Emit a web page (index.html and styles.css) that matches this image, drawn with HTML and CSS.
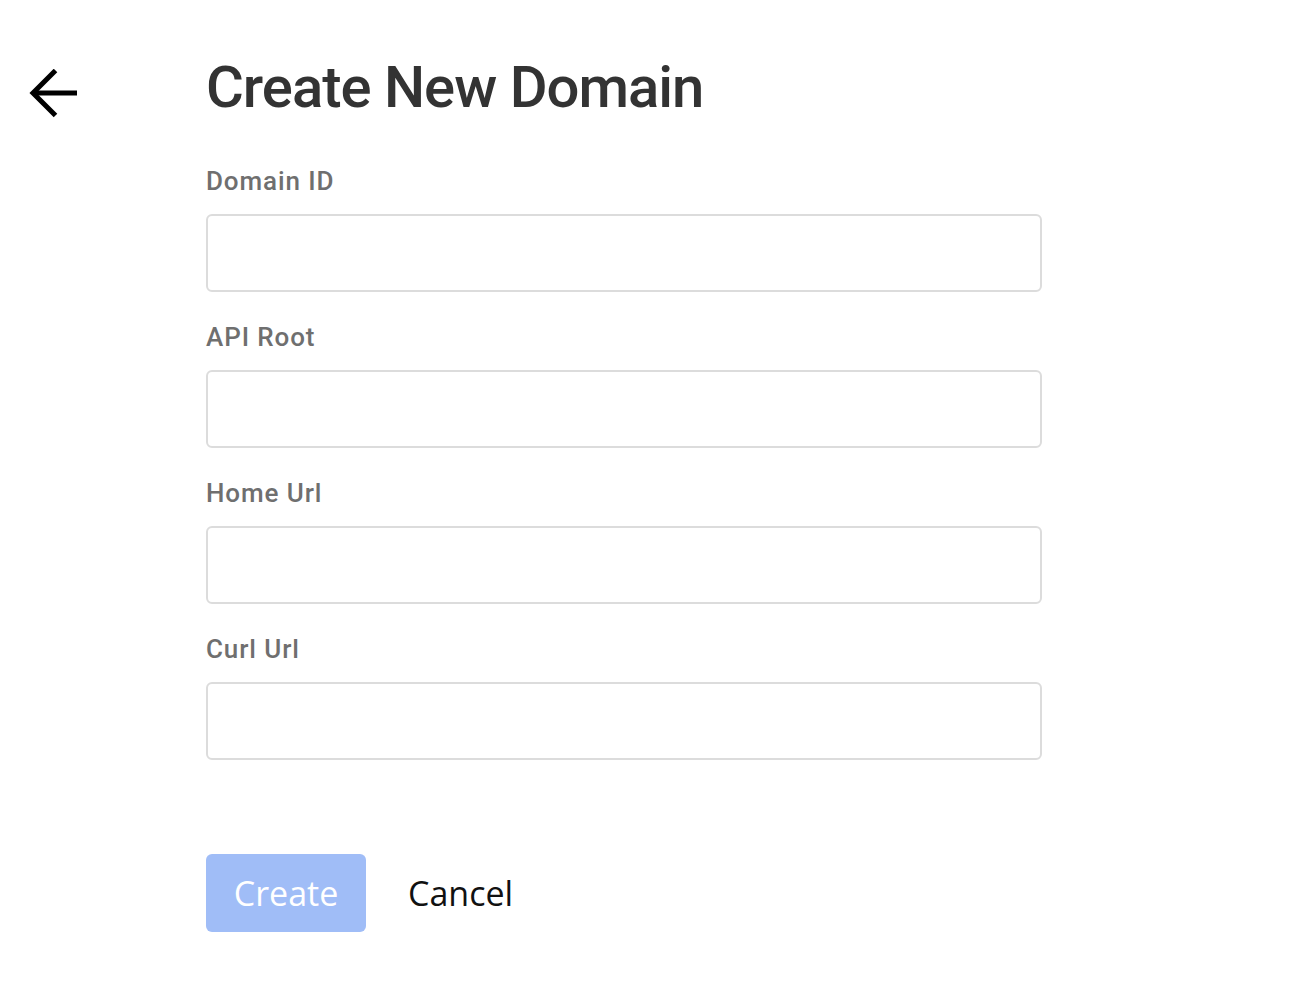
FILE: index.html
```html
<!DOCTYPE html>
<html lang="en">
<head>
<meta charset="utf-8">
<title>Create New Domain</title>
<link rel="stylesheet" href="styles.css">
</head>
<body>
<div class="page">
  <a class="back" href="#" aria-label="Back">
    <svg width="52" height="52" viewBox="0 0 52 52" fill="none" stroke="#000" stroke-width="5">
      <path d="M49 24H5"/>
      <path d="M27.5 1.5L5 24L27.5 46.5"/>
    </svg>
  </a>
  <main class="content">
    <h1 class="title">Create New Domain</h1>
    <form class="form">
      <label class="field">
        <span class="label">Domain ID</span>
        <input class="input" type="text">
      </label>
      <label class="field">
        <span class="label">API Root</span>
        <input class="input" type="text">
      </label>
      <label class="field">
        <span class="label">Home Url</span>
        <input class="input" type="text">
      </label>
      <label class="field">
        <span class="label">Curl Url</span>
        <input class="input" type="text">
      </label>
      <div class="actions">
        <button type="button" class="btn-create" disabled>Create</button>
        <button type="button" class="btn-cancel">Cancel</button>
      </div>
    </form>
  </main>
</div>
</body>
</html>
```

FILE: styles.css
```css
html, body {
  margin: 0;
  padding: 0;
  background: #fff;
}
body {
  font-family: Roboto, "Liberation Sans", sans-serif;
}
.page {
  display: flex;
  align-items: flex-start;
  padding-top: 50px;
}
.back {
  display: block;
  margin-left: 28px;
  margin-top: 19px;
  width: 52px;
  height: 52px;
  line-height: 0;
}
.content {
  margin-left: 126px;
  width: 836px;
}
.title {
  margin: 0;
  font-size: 58px;
  font-weight: 500;
  letter-spacing: -1px;
  color: #333;
  line-height: 74px;
}
.form {
  display: flex;
  flex-direction: column;
  margin-top: 42px;
}
.field {
  display: flex;
  flex-direction: column;
}
.label {
  font-family: Roboto, "Open Sans", sans-serif;
  font-size: 26px;
  font-weight: 500;
  letter-spacing: 0.9px;
  color: #6f6f6f;
  line-height: 30px;
  margin-bottom: 18px;
}
.input {
  box-sizing: border-box;
  height: 78px;
  width: 836px;
  border: 2px solid #dcdcdc;
  border-radius: 6px;
  background: #fff;
  margin: 0 0 30px 0;
  font-size: 24px;
  padding: 0 16px;
  outline: none;
}
.actions {
  display: flex;
  align-items: center;
  gap: 42px;
  margin-top: 64px;
}
.btn-create {
  width: 160px;
  height: 78px;
  border: none;
  border-radius: 6px;
  background: #a0bdf7;
  color: #fff;
  font-family: "Open Sans", Roboto, sans-serif;
  font-size: 34px;
  padding: 0;
}
.btn-cancel {
  border: none;
  background: none;
  padding: 0;
  color: #111;
  font-family: "Open Sans", Roboto, sans-serif;
  font-size: 34px;
  cursor: pointer;
}
```
